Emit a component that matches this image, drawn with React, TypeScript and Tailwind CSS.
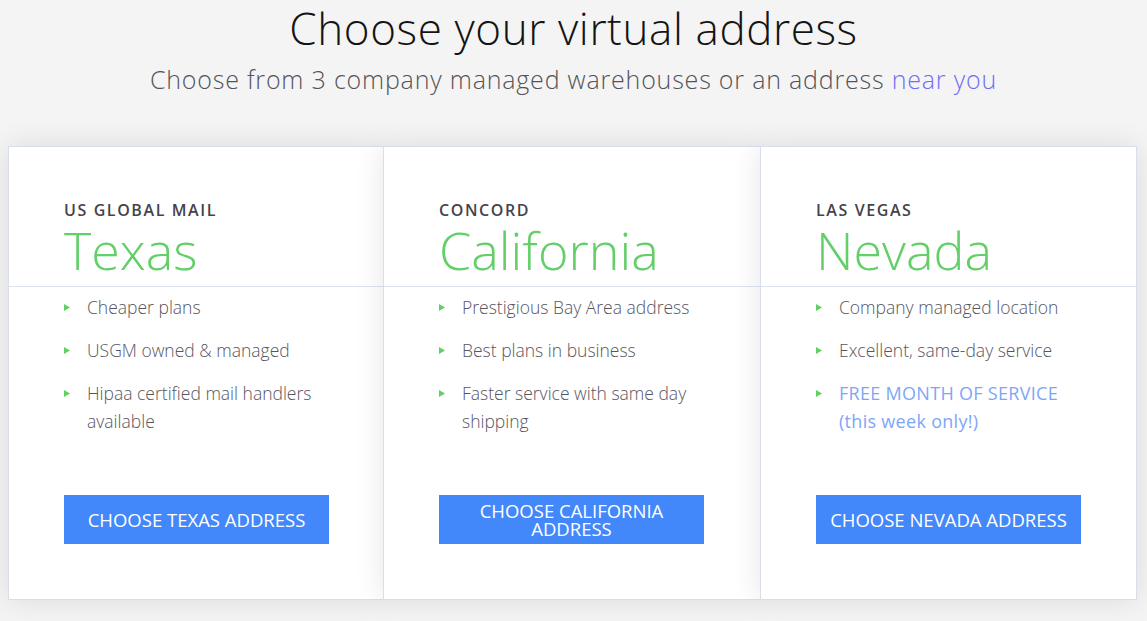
import type { ReactNode } from 'react'

type Location = {
  company: string
  state: string
  features: ReactNode[]
  button: string
}

const locations: Location[] = [
  {
    company: 'US Global Mail',
    state: 'Texas',
    features: ['Cheaper plans', 'USGM owned & managed', 'Hipaa certified mail handlers available'],
    button: 'Choose Texas address',
  },
  {
    company: 'Concord',
    state: 'California',
    features: ['Prestigious Bay Area address', 'Best plans in business', 'Faster service with same day shipping'],
    button: 'Choose California address',
  },
  {
    company: 'Las Vegas',
    state: 'Nevada',
    features: [
      'Company managed location',
      'Excellent, same-day service',
      <span key="free" className="font-normal text-[18px] tracking-[0.3px] text-[#7ea6f8]">
        FREE MONTH OF SERVICE
        <br />
        (this week only!)
      </span>,
    ],
    button: 'Choose Nevada address',
  },
]

function Bullet() {
  return (
    <svg width="6" height="7" viewBox="0 0 6 7" className="mt-[11px] shrink-0">
      <path d="M0 0 L6 3.5 L0 7 Z" fill="#5fcf66" />
    </svg>
  )
}

function LocationCard({ company, state, features, button }: Location) {
  return (
    <div className="relative flex flex-col bg-white border border-[#d9deed] shadow-[0_0_28px_rgba(0,0,0,0.1)] -ml-px first:ml-0">
      {/* Header */}
      <div className="pt-[53px] pl-[55px] pb-[6px] border-b border-[#dde2f1]">
        <div className="text-[16px] leading-[20px] font-semibold tracking-[0.1em] uppercase text-[#45434a]">
          {company}
        </div>
        <div className="text-[52px] leading-[60px] font-light text-[#62cf69]">{state}</div>
      </div>

      {/* Features */}
      <ul className="flex-1 pl-[55px] pr-[40px] pt-[6px]">
        {features.map((f, i) => (
          <li key={i} className="flex gap-[17px] mb-[15px]">
            <Bullet />
            <span className="text-[17.5px] leading-[28px] font-light text-[#56555f]">{f}</span>
          </li>
        ))}
      </ul>

      {/* Button */}
      <div className="pl-[55px] pb-[55px]">
        <button className="w-[265px] h-[49px] bg-[#4388fa] text-white text-[18.5px] leading-[18px] uppercase px-[12px]">
          {button}
        </button>
      </div>
    </div>
  )
}

export default function App() {
  return (
    <div className="min-h-[621px] bg-[#f4f4f4] pt-[2px] font-['Open_Sans',sans-serif]">
      <h1 className="text-center text-[44px] leading-[52px] font-light tracking-[0.6px] text-[#141414]">
        Choose your virtual address
      </h1>
      <p className="text-center text-[25px] leading-[30px] font-light tracking-[0.8px] text-[#55535a] mt-[10px]">
        Choose from 3 company managed warehouses or an address{' '}
        <span className="text-[#6f6cf7]">near you</span>
      </p>
      <div className="ml-[8px] mt-[52px] w-[1129px] grid grid-cols-[376px_377px_376px] h-[454px]">
        {locations.map((loc) => (
          <LocationCard key={loc.state} {...loc} />
        ))}
      </div>
    </div>
  )
}
